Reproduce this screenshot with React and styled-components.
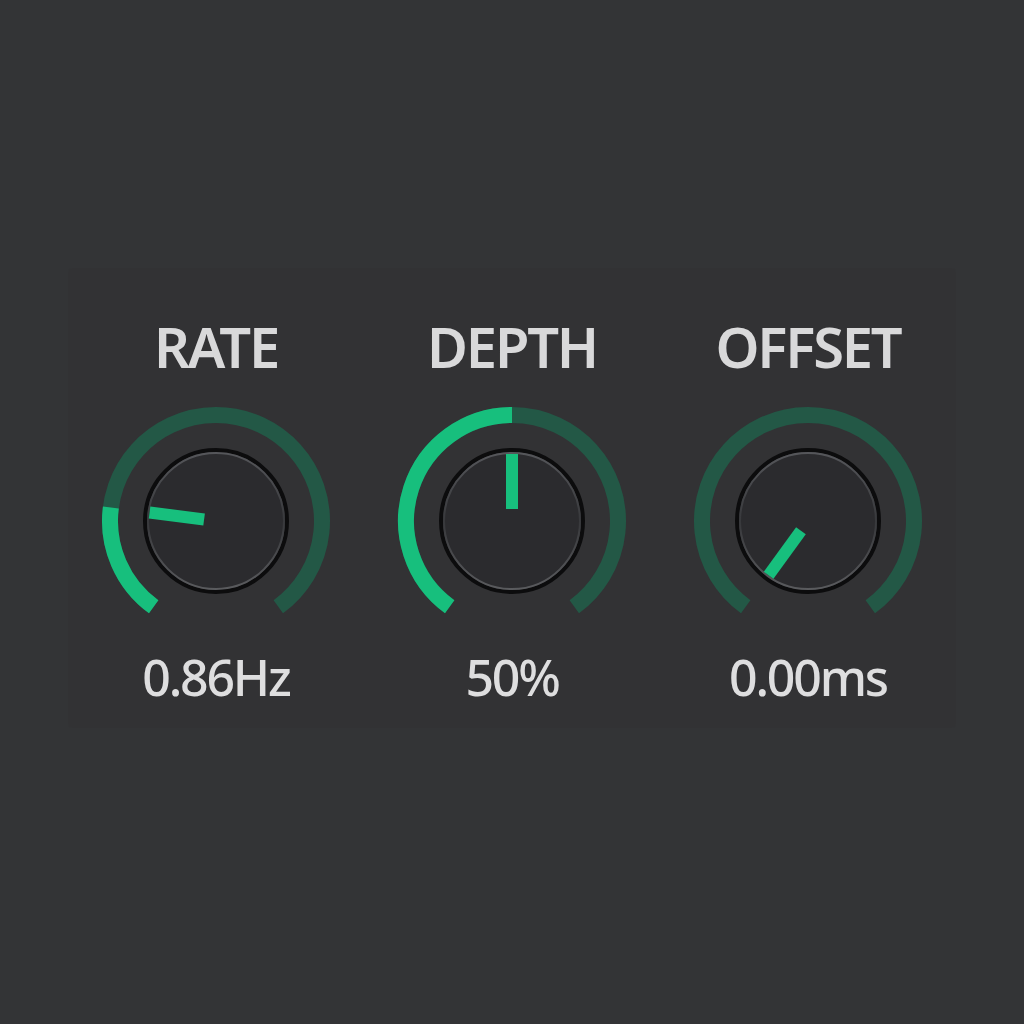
import React from "react";
import styled, { createGlobalStyle } from "styled-components";

const Global = createGlobalStyle`
  html, body { margin: 0; padding: 0; }
  body {
    background: #333436;
    font-family: "Noto Sans", "Open Sans", sans-serif;
    -webkit-font-smoothing: antialiased;
  }
`;

const Page = styled.div`
  height: 1024px;
  box-sizing: border-box;
  padding-top: 268px;
  display: flex;
  justify-content: center;
  align-items: flex-start;
`;

const Panel = styled.div`
  display: flex;
  flex-direction: row;
  padding: 50px 0 25px;
  background: rgba(0, 0, 0, 0.018);
  border-radius: 4px;
`;

const Column = styled.div`
  width: 296px;
  display: flex;
  flex-direction: column;
  align-items: center;
`;

const Label = styled.div`
  font-size: 56px;
  line-height: 56px;
  font-weight: 600;
  letter-spacing: -2.2px;
  color: #d9d9da;
  margin-bottom: 27px;
`;

const Value = styled.div`
  font-size: 50px;
  line-height: 51px;
  font-weight: 500;
  letter-spacing: -2.2px;
  color: #dededf;
  margin-top: 11px;
`;

const KnobSvg = styled.svg`
  display: block;
  width: 240px;
  height: 240px;
`;

const MIN_A = -144;
const MAX_A = 144;
const C = 120;

const pt = (r, a) => {
  const rad = (a * Math.PI) / 180;
  return [C + r * Math.sin(rad), C - r * Math.cos(rad)];
};

const arc = (r, a0, a1) => {
  const [x0, y0] = pt(r, a0);
  const [x1, y1] = pt(r, a1);
  const large = a1 - a0 > 180 ? 1 : 0;
  return `M ${x0} ${y0} A ${r} ${r} 0 ${large} 1 ${x1} ${y1}`;
};

function Knob({ label, value, frac }) {
  const a = MIN_A + (MAX_A - MIN_A) * frac;
  const [px0, py0] = pt(12, a);
  const [px1, py1] = pt(67, a);
  return (
    <Column>
      <Label>{label}</Label>
      <KnobSvg viewBox="0 0 240 240">
        <defs>
          <linearGradient id={`rim-${label}`} x1="0" y1="0" x2="0" y2="1">
            <stop offset="0" stopColor="#55565a" />
            <stop offset="0.5" stopColor="#38393c" />
            <stop offset="1" stopColor="#5a5b5e" />
          </linearGradient>
        </defs>
        <path d={arc(106, MIN_A, MAX_A)} fill="none" stroke="#235846" strokeWidth="16" />
        {frac > 0.001 && (
          <path d={arc(106, MIN_A, a)} fill="none" stroke="#17bf7d" strokeWidth="16" />
        )}
        <circle cx={C} cy={C} r="71" fill="#2b2b2e" stroke="#0c0c0d" strokeWidth="4" />
        <circle cx={C} cy={C} r="68" fill="none" stroke={`url(#rim-${label})`} strokeWidth="2" />
        <line x1={px0} y1={py0} x2={px1} y2={py1} stroke="#17bf7d" strokeWidth="12" />
      </KnobSvg>
      <Value>{value}</Value>
    </Column>
  );
}

export default function App() {
  return (
    <>
      <Global />
      <Page>
        <Panel>
          <Knob label="RATE" value="0.86Hz" frac={0.213} />
          <Knob label="DEPTH" value="50%" frac={0.5} />
          <Knob label="OFFSET" value="0.00ms" frac={0} />
        </Panel>
      </Page>
    </>
  );
}
